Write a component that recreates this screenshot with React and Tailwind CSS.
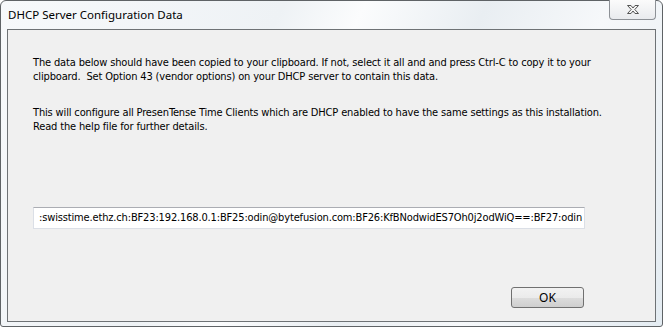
import React from 'react';

const ui = { fontFamily: '"Liberation Sans", Arial, sans-serif' };
const body = { fontFamily: '"DejaVu Sans Condensed", "DejaVu Sans", Tahoma, sans-serif' };
const caption = { fontFamily: '"Noto Sans", "Open Sans", sans-serif' };

function CloseGlyph() {
  // outlined "X" like the Aero caption button
  return (
    <svg width="14" height="11" viewBox="0 0 14 11">
      <path
        d="M1.5 1.5 H5 L7 4 L9 1.5 H12.5 L8.8 5.5 L12.5 9.5 H9 L7 7 L5 9.5 H1.5 L5.2 5.5 Z"
        fill="#f4f4f4"
        stroke="#555"
        strokeWidth="1"
        strokeLinejoin="round"
      />
    </svg>
  );
}

export default function App() {
  return (
    <div className="w-[663px] h-[327px] bg-white" style={ui}>
      {/* Window frame */}
      <div className="relative flex flex-col h-full border border-[#5f6366] rounded-t-[6px] rounded-b-[3px] bg-[linear-gradient(115deg,#f7f9fb_0%,#eef2f5_35%,#fbfcfd_45%,#e9eef2_60%,#f6f8fa_75%,#e4ecf2_100%)] px-[6px] pb-[4px]">
        {/* Title bar */}
        <div className="h-[28px] flex items-center pl-[1px]">
          <span className="text-[11.5px] text-black leading-none" style={caption}>DHCP Server Configuration Data</span>
        </div>
        <button className="absolute top-[-1px] right-[6px] w-[47px] h-[20px] flex items-center justify-center border border-[#8d9196] border-t-0 rounded-b-[4px] bg-[linear-gradient(#fbfbfb,#e9ebee)]">
          <CloseGlyph />
        </button>

        {/* Client area */}
        <div className="flex-1 flex flex-col border border-[#6e7275] bg-[#f0f0f0] pl-[25px] pr-[68px] pt-[26px] text-[11px] leading-[14px] tracking-[-0.15px] text-black" style={body}>
          <p className="whitespace-pre">
            The data below should have been copied to your clipboard. If not, select it all and and press Ctrl-C to copy it to your
            <br />
            clipboard.  Set Option 43 (vendor options) on your DHCP server to contain this data.
          </p>
          <p className="mt-[22px] whitespace-pre">
            This will configure all PresenTense Time Clients which are DHCP enabled to have the same settings as this installation.
            <br />
            Read the help file for further details.
          </p>

          <div className="mt-[73px] w-[552px] h-[22px] flex items-center overflow-hidden bg-white border border-[#dbdfe6] border-t-[#abadb3] px-[5px]">
            <span className="whitespace-pre">
              :swisstime.ethz.ch:BF23:192.168.0.1:BF25:odin@bytefusion.com:BF26:KfBNodwidES7Oh0j2odWiQ==:BF27:odin
            </span>
          </div>

          <div className="flex-1 flex items-end justify-end pb-[13px] pr-[3px]">
            <button className="w-[73px] h-[21px] rounded-[3px] border border-[#707070] bg-[linear-gradient(#f2f2f2_0%,#ebebeb_50%,#dddddd_51%,#cfcfcf_100%)] text-[12px] leading-none tracking-normal text-black" style={caption}>
              OK
            </button>
          </div>
        </div>
      </div>
    </div>
  );
}
